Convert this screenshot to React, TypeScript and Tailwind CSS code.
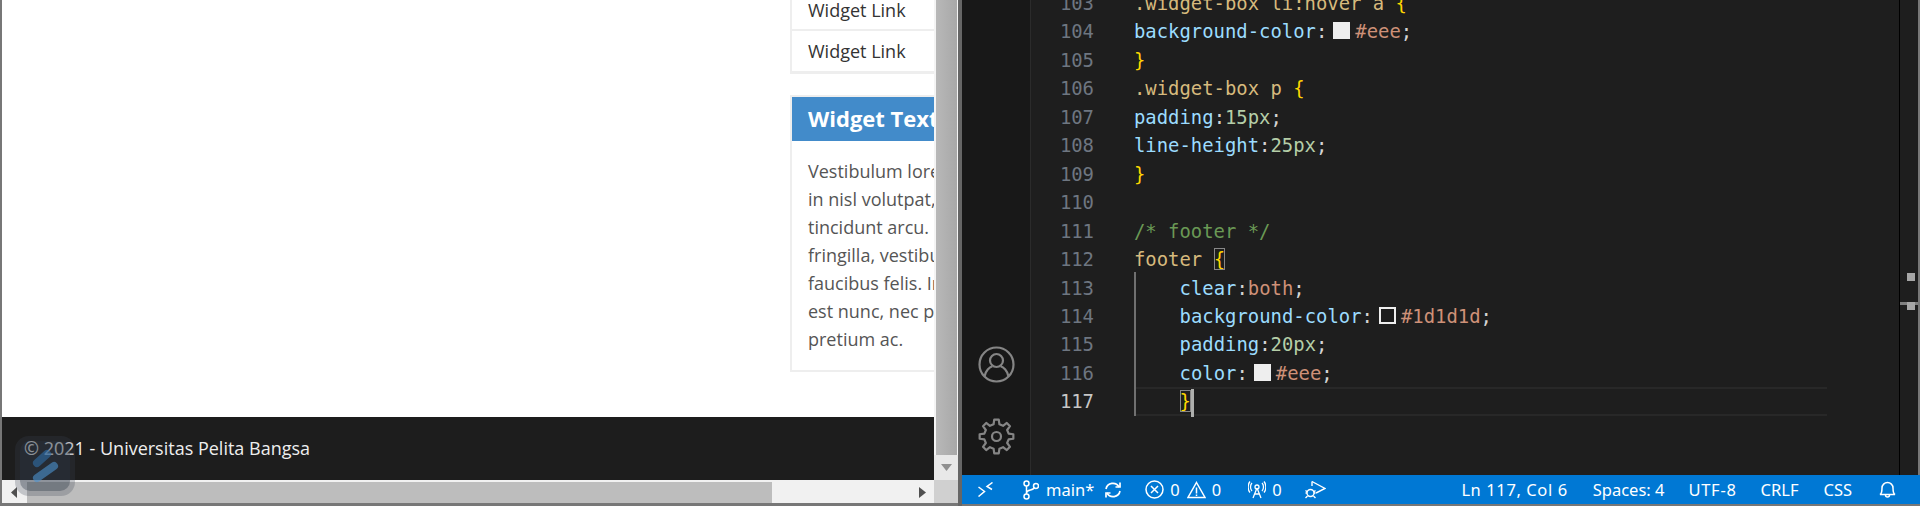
import { useMemo } from "react";

// vs code style gear outline
function gearPath(cx: number, cy: number, outer: number, inner: number, teeth: number) {
  const pts: string[] = [];
  const step = (Math.PI * 2) / teeth;
  for (let i = 0; i < teeth; i++) {
    const a = i * step - Math.PI / 2;
    const at = (r: number, d: number) =>
      `${(cx + r * Math.cos(a + d)).toFixed(2)} ${(cy + r * Math.sin(a + d)).toFixed(2)}`;
    pts.push(at(inner, -step * 0.3), at(outer, -step * 0.17), at(outer, step * 0.17), at(inner, step * 0.3));
  }
  return "M" + pts.join("L") + "Z";
}

const k = "text-[#9cdcfe]";
const v = "text-[#ce9178]";
const n = "text-[#b5cea8]";
const p = "text-[#d4d4d4]";
const s = "text-[#d7ba7d]";
const b = "text-[#ffd700]";

function Swatch({ color }: { color: string }) {
  return (
    <span
      className="inline-block w-[17px] h-[17px] mr-[5px] ml-[6px] align-[-1px] border-2 border-[#eeeeee]"
      style={{ backgroundColor: color }}
    />
  );
}

function Bracket({ ch, box }: { ch: string; box?: boolean }) {
  return <span className={`${b} ${box ? "outline outline-1 outline-[#888888] -outline-offset-1" : ""}`}>{ch}</span>;
}

const lines: { no: number; body: React.ReactNode }[] = [
  { no: 103, body: <><span className={s}>.widget-box li:hover a</span> <Bracket ch="{" /></> },
  { no: 104, body: <><span className={k}>background-color</span><span className={p}>:</span><Swatch color="#eeeeee" /><span className={v}>#eee</span><span className={p}>;</span></> },
  { no: 105, body: <Bracket ch="}" /> },
  { no: 106, body: <><span className={s}>.widget-box p</span> <Bracket ch="{" /></> },
  { no: 107, body: <><span className={k}>padding</span><span className={p}>:</span><span className={n}>15px</span><span className={p}>;</span></> },
  { no: 108, body: <><span className={k}>line-height</span><span className={p}>:</span><span className={n}>25px</span><span className={p}>;</span></> },
  { no: 109, body: <Bracket ch="}" /> },
  { no: 110, body: null },
  { no: 111, body: <span className="text-[#6a9955]">/* footer */</span> },
  { no: 112, body: <><span className={s}>footer</span> <Bracket ch="{" box /></> },
  { no: 113, body: <span className="pl-[45.6px]"><span className={k}>clear</span><span className={p}>:</span><span className={v}>both</span><span className={p}>;</span></span> },
  { no: 114, body: <span className="pl-[45.6px]"><span className={k}>background-color</span><span className={p}>:</span><Swatch color="#1d1d1d" /><span className={v}>#1d1d1d</span><span className={p}>;</span></span> },
  { no: 115, body: <span className="pl-[45.6px]"><span className={k}>padding</span><span className={p}>:</span><span className={n}>20px</span><span className={p}>;</span></span> },
  { no: 116, body: <span className="pl-[45.6px]"><span className={k}>color</span><span className={p}>:</span><Swatch color="#eeeeee" /><span className={v}>#eee</span><span className={p}>;</span></span> },
  { no: 117, body: <span className="pl-[45.6px]"><Bracket ch="}" box /><span className="inline-block w-[3px] h-[28px] align-top bg-[#aeafad]" /></span> },
];

function BrowserPane() {
  const para = [
    "Vestibulum lorem",
    "in nisl volutpat,",
    "tincidunt arcu.",
    "fringilla, vestibulum",
    "faucibus felis. In",
    "est nunc, nec p",
    "pretium ac.",
  ];
  return (
    <div className="relative w-[958px] h-full shrink-0 flex bg-white border-l-2 border-[#777777]">
      <div className="flex-1 min-w-0 flex flex-col h-full">
        <div className="flex-1 min-h-0 flex flex-col overflow-hidden">
          <div className="flex-1 min-h-0 flex justify-end overflow-hidden">
            <aside className="w-[144px] shrink-0 font-['Open_Sans'] overflow-hidden">
              <ul className="border-l-2 border-b-[3px] border-[#eeeeee] text-[18px] text-[#333333]">
                <li className="h-[31px] border-b-2 border-[#eeeeee] pl-[16px] leading-[20px]">Widget Link</li>
                <li className="h-[40px] pl-[16px] pt-[8px] leading-[24px]">Widget Link</li>
              </ul>
              <div className="mt-[21px] border-l-2 border-t-2 border-b-2 border-[#eeeeee] h-[277px]">
                <h3 className="h-[44px] bg-[#428bca] text-white font-bold text-[22px] leading-[42px] pl-[16px] whitespace-nowrap overflow-hidden">
                  Widget Text
                </h3>
                <div className="pt-[16px] pl-[16px] text-[#555555] text-[18px] leading-[28px] whitespace-nowrap overflow-hidden">
                  {para.map((t) => (
                    <div key={t}>{t}</div>
                  ))}
                </div>
              </div>
            </aside>
          </div>
          <footer className="h-[63px] shrink-0 bg-[#1d1d1d] text-[#eeeeee] font-['Open_Sans'] text-[18px] pl-[22px] pt-[19px] leading-[24px]">
            © 2021 - Universitas Pelita Bangsa
          </footer>
        </div>
        <div className="h-[2px] shrink-0 bg-[#f1f1f1]" />
        <div className="h-[21px] shrink-0 flex bg-[#f1f1f1]">
          <div className="w-[25px] shrink-0 flex items-center pl-[9px]">
            <svg width="7" height="11" viewBox="0 0 7 11"><path d="M6 0v11L0 5.500z" fill="#505050" /></svg>
          </div>
          <div className="w-[745px] shrink-0 bg-[#bdbdbd]" />
          <div className="flex-1 flex items-center justify-end pr-[8px]">
            <svg width="7" height="11" viewBox="0 0 7 11"><path d="M0 0v11l7-5.500z" fill="#505050" /></svg>
          </div>
        </div>
        <div className="h-[3px] shrink-0 bg-[#777777]" />
      </div>
      <div className="w-[24px] shrink-0 flex flex-col bg-[#e8e8e8]">
        <div className="flex-1 flex bg-[#f4f4f4]">
          <div className="ml-[2px] w-[21px] bg-gradient-to-r from-[#b8b8b8] to-[#a8a8a8]" />
        </div>
        <div className="h-[25px] shrink-0 flex items-center justify-center">
          <svg width="11" height="7" viewBox="0 0 11 7"><path d="M0 0h11L5.500 7z" fill="#8f8f8f" /></svg>
        </div>
        <div className="h-[23px] shrink-0 bg-[#d0d0d0]" />
        <div className="h-[3px] shrink-0 bg-[#777777]" />
      </div>
      {/* floating watermark */}
      <div className="absolute left-[13px] top-[436px] w-[60px] h-[60px] rounded-[14px] bg-[#3a4352]/25 p-[5px]">
        <div className="w-[50px] h-[50px] rounded-[10px] bg-[#2c3644]/35">
          <svg width="50" height="50" viewBox="0 0 50 50" fill="none" strokeWidth="8" strokeLinecap="round">
            <path d="M17 22 L27 13" stroke="#2f6ea8" opacity="0.6" />
            <path d="M17 37 L34 25" stroke="#4b93d1" opacity="0.6" />
          </svg>
        </div>
      </div>
    </div>
  );
}

function Editor() {
  return (
    <div className="flex-1 min-h-0 flex overflow-hidden bg-[#1e1e1e]">
      <div className="w-[69px] shrink-0 bg-[#181818] border-r border-[#2b2b2b] flex flex-col items-center justify-end pb-[20px] gap-[35px] text-[#858585]">
        <AccountIcon />
        <GearIcon />
      </div>
      <div className="flex-1 min-w-0 relative overflow-hidden">
        <div className="-mt-[11px] font-['DejaVu_Sans_Mono'] text-[18.9px]">
          {lines.map((l) => (
            <div key={l.no} className="h-[28.46px] leading-[28.46px] flex whitespace-pre w-[796px]">
              <div className={`w-[63px] shrink-0 text-right ${l.no === 117 ? "text-[#c6c6c6]" : "text-[#6e7681]"}`}>
                {l.no}
              </div>
              <div
                className={`relative ml-[40px] flex-1 ${l.no === 117 ? "border-y-2 border-[#282828] leading-[24.46px]" : ""}`}
              >
                {l.no >= 113 && <div className="absolute left-0 -top-[2px] -bottom-[2px] w-[2px] bg-[#707070]" />}
                {l.body}
              </div>
            </div>
          ))}
        </div>
        {/* overview ruler */}
        <div className="absolute right-0 top-0 bottom-0 w-[21px] border-l border-black border-r-2 border-r-[#777777]">
          <div className="absolute left-[7px] top-[273px] w-[8px] h-[8px] bg-[#a6a6a6]" />
          <div className="absolute left-0 right-0 top-[302px] h-[3px] bg-[#808080]" />
          <div className="absolute left-[7px] top-[302px] w-[8px] h-[8px] bg-[#a6a6a6]" />
        </div>
      </div>
    </div>
  );
}

function AccountIcon() {
  return (
    <svg width="37" height="37" viewBox="0 0 37 37" fill="none" stroke="currentColor" strokeWidth="2.200">
      <circle cx="18.500" cy="18.500" r="17" />
      <circle cx="18.500" cy="14.500" r="6.500" />
      <path d="M6.500 30.500c1-6 5-9.500 8-10.200M30.500 30.500c-1-6-5-9.500-8-10.200" />
    </svg>
  );
}

function GearIcon() {
  const d = useMemo(() => gearPath(18.5, 18.5, 17, 12.5, 8), []);
  return (
    <svg width="37" height="37" viewBox="0 0 37 37" fill="none" stroke="currentColor" strokeWidth="2.200" strokeLinejoin="round">
      <path d={d} />
      <circle cx="18.500" cy="18.500" r="4.500" />
    </svg>
  );
}

function StatusBar() {
  return (
    <div className="h-[29px] shrink-0 bg-[#0078d4] text-white font-['Noto_Sans'] text-[16.5px] leading-[29px] flex items-center whitespace-nowrap">
      <svg className="ml-[16px]" width="15" height="15" viewBox="0 0 15 15" fill="none" stroke="white" strokeWidth="1.500">
        <path d="M0.500 5l6 4.500-6 5M14.500 0.500L9 4.500l5 3" />
      </svg>
      <svg className="ml-[30px]" width="16" height="20" viewBox="0 0 16 20" fill="none" stroke="white" strokeWidth="1.500">
        <circle cx="3.500" cy="3.500" r="2.500" />
        <circle cx="3.500" cy="16.500" r="2.500" />
        <circle cx="13" cy="6" r="2.500" />
        <path d="M3.500 6v8M3.500 13c0-4 7-2 8-5.500" />
      </svg>
      <span className="ml-[7px]">main*</span>
      <svg className="ml-[9px]" width="20" height="18" viewBox="0 0 20 18" fill="none" stroke="white" strokeWidth="1.700">
        <path d="M3 8a7 7 0 0 1 13-2M17 10a7 7 0 0 1-13 2" />
        <path d="M17 1.500V6h-4.500M3 16.500V12h4.500" />
      </svg>
      <svg className="ml-[22px]" width="19" height="19" viewBox="0 0 19 19" fill="none" stroke="white" strokeWidth="1.500">
        <circle cx="9.500" cy="9.500" r="8.500" />
        <path d="M6 6l7 7M13 6l-7 7" />
      </svg>
      <span className="ml-[6px]">0</span>
      <svg className="ml-[7px]" width="19" height="18" viewBox="0 0 19 18" fill="none" stroke="white" strokeWidth="1.500">
        <path d="M9.500 1.500L18 16.500H1z" />
        <path d="M9.500 6.500v6M9.500 13.500v1.500" />
      </svg>
      <span className="ml-[6px]">0</span>
      <svg className="ml-[27px]" width="18" height="18" viewBox="0 0 18 18" fill="none" stroke="white" strokeWidth="1.300">
        <circle cx="9" cy="6" r="2" />
        <path d="M9 7l-4 10M9 7l4 10M6.500 13h5M4 2c-2 2-2 6 0 8M14 2c2 2 2 6 0 8M2 0.500c-2.500 3-2.500 8 0 11M16 0.500c2.500 3 2.500 8 0 11" />
      </svg>
      <span className="ml-[6px]">0</span>
      <svg className="ml-[23px]" width="21" height="19" viewBox="0 0 21 19" fill="none" stroke="white" strokeWidth="1.400">
        <path d="M7 1.500L20 8.500 11 13" />
        <path d="M7 1.500V6" />
        <circle cx="5.500" cy="13" r="3.500" />
        <path d="M0.500 10.500l2 1.500M10.500 10.500l-2 1.500M0.500 13h1.500M9 13h1.500M0.500 18l2-2M10.500 18l-2-2" />
      </svg>
      <div className="ml-auto flex items-center">
        <span className="tracking-[0.6px]">Ln 117, Col 6</span>
        <span className="ml-[25px]">Spaces: 4</span>
        <span className="ml-[24px] tracking-[0.7px]">UTF-8</span>
        <span className="ml-[24px]">CRLF</span>
        <span className="ml-[25px]">CSS</span>
        <svg className="ml-[27px] mr-[24px]" width="17" height="19" viewBox="0 0 17 19" fill="none" stroke="white" strokeWidth="1.500">
          <path d="M1 14.500c2-1 2-3 2-6.500a5.500 5.500 0 0 1 11 0c0 3.500 0 5.500 2 6.500z" />
          <path d="M6.500 15a2 2 0 0 0 4 0" />
        </svg>
      </div>
    </div>
  );
}

export default function App() {
  return (
    <div className="w-[1920px] h-[506px] flex overflow-hidden bg-[#777777]">
      <BrowserPane />
      <div className="w-[4px] shrink-0 bg-[#666666]" />
      <div className="flex-1 min-w-0 flex flex-col pb-[2px]">
        <Editor />
        <StatusBar />
      </div>
    </div>
  );
}
